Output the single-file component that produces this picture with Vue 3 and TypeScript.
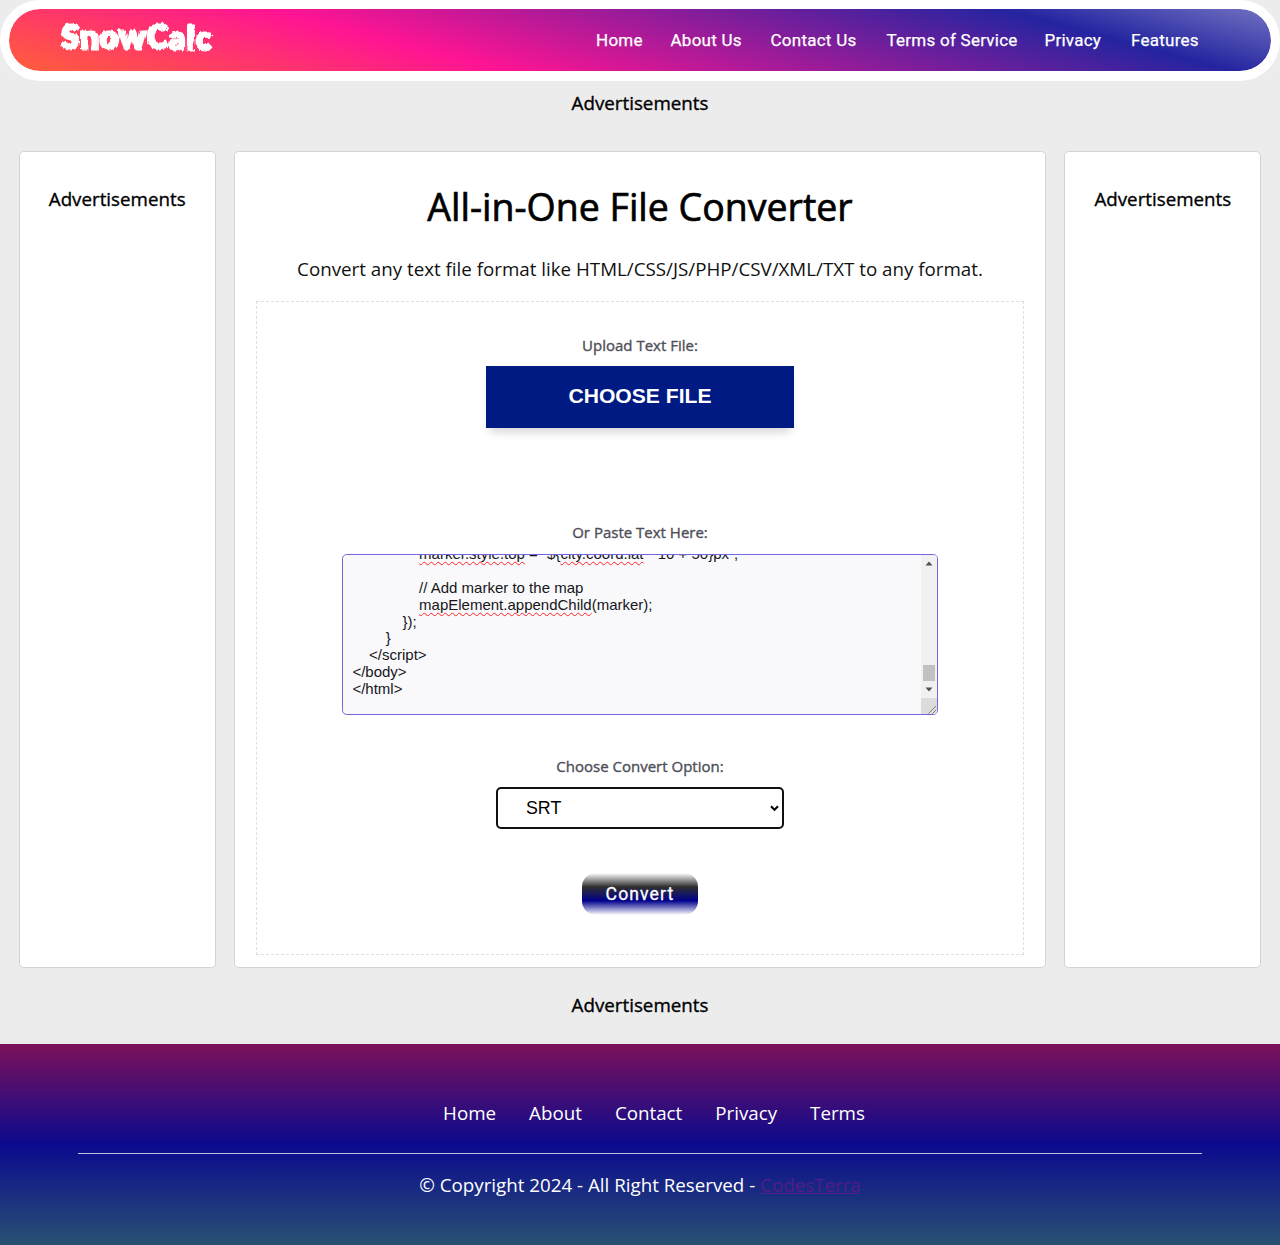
<script setup lang="ts">
interface NavItem {
  label: string
  width: number
}

const navItems: NavItem[] = [
  { label: 'Home', width: 46.5 },
  { label: 'About Us', width: 72 },
  { label: 'Contact Us', width: 88 },
  { label: 'Terms of Service', width: 130 },
  { label: 'Privacy', width: 58.5 },
  { label: 'Features', width: 70 },
]

const footerLinks: string[] = ['Home', 'About', 'Contact', 'Privacy', 'Terms']

interface Piece {
  text: string
  flagged?: boolean
}

const codeLines: Piece[][] = [
  [
    { text: '                ' },
    { text: 'marker.style.top', flagged: true },
    { text: ' = `${' },
    { text: 'city.coord.lat', flagged: true },
    { text: ' * 10 + 50}px`;' },
  ],
  [{ text: ' ' }],
  [{ text: '                // Add marker to the map' }],
  [
    { text: '                ' },
    { text: 'mapElement.appendChild', flagged: true },
    { text: '(marker);' },
  ],
  [{ text: '            });' }],
  [{ text: '        }' }],
  [{ text: '    </' + 'script>' }],
  [{ text: '</body>' }],
  [{ text: '</html>' }],
]

const logoLetters: string[] = [...'SnowCalc']
</script>

<template>
  <div class="page">
    <header class="header">
      <svg class="defs" width="0" height="0" aria-hidden="true">
        <filter id="rough" x="-5%" y="-20%" width="110%" height="140%">
          <feTurbulence type="turbulence" baseFrequency="0.26 0.05" numOctaves="1" seed="4" result="n" />
          <feDisplacementMap in="SourceGraphic" in2="n" scale="4.5" xChannelSelector="R" yChannelSelector="G" />
        </filter>
      </svg>
      <div class="logo">
        <span v-for="(l, i) in logoLetters" :key="i" :class="['glyph', { low: i > 4 }]">{{ l }}</span>
      </div>
      <nav class="nav">
        <a v-for="n in navItems" :key="n.label" :style="{ width: n.width + 'px' }">{{ n.label }}</a>
      </nav>
    </header>

    <div class="ad top-ad">Advertisements</div>

    <main class="columns">
      <aside class="card side"><div class="ad">Advertisements</div></aside>
      <section class="card main">
        <h1>All-in-One File Converter</h1>
        <p class="lead">Convert any text file format like HTML/CSS/JS/PHP/CSV/XML/TXT to any format.</p>
        <div class="converter">
          <label class="upload-label">Upload Text File:</label>
          <button class="choose" type="button">CHOOSE FILE</button>
          <label class="paste-label">Or Paste Text Here:</label>
          <div class="editor">
            <div class="code">
              <div v-for="(line, i) in codeLines" :key="i" class="line"><span v-for="(p, j) in line" :key="j" :class="{ flagged: p.flagged }">{{ p.text }}</span></div>
            </div>
            <div class="scrollbar">
              <svg width="16" height="160" viewBox="0 0 16 160">
                <path d="M4.500 10.500 8 6.500 11.500 10.500z" fill="#505050" />
                <rect x="2" y="110" width="12" height="16" fill="#c1c1c1" />
                <path d="M4.500 132.500 8 136.500 11.500 132.500z" fill="#505050" />
                <rect x="0" y="143" width="16" height="17" fill="#dcdcdc" />
                <path d="M7.500 158.500 15 151M11.500 158.500 15 155" stroke="#808080" stroke-width="1" fill="none" />
              </svg>
            </div>
          </div>
          <label class="option-label">Choose Convert Option:</label>
          <div class="select">
            <span>SRT</span>
            <svg width="9" height="7" viewBox="0 0 9 7"><path d="M1 1.300 4.500 4.800 8 1.300" fill="none" stroke="#000" stroke-width="2" /></svg>
          </div>
          <button class="convert" type="button">Convert</button>
        </div>
      </section>
      <aside class="card side"><div class="ad">Advertisements</div></aside>
    </main>

    <div class="ad bottom-ad">Advertisements</div>

    <footer class="footer">
      <nav class="footer-nav">
        <a v-for="f in footerLinks" :key="f">{{ f }}</a>
      </nav>
      <hr />
      <p>© Copyright 2024 - All Right Reserved - <a class="credit">CodesTerra</a></p>
    </footer>
  </div>
</template>

<style>
body {
  margin: 0;
  background: #ececec;
}
</style>

<style scoped>
.page {
  width: 1280px;
  height: 1245px;
  overflow: hidden;
  background: #ececec;
  font-family: 'Open Sans', sans-serif;
  font-size: 18.75px;
  color: #000;
  display: flex;
  flex-direction: column;
}
.header {
  box-sizing: border-box;
  height: 80.5px;
  flex: none;
  border: solid #fff;
  border-width: 9.4px 9.4px 10px;
  border-radius: 40px;
  background: linear-gradient(15deg, #ff5f3a 0%, #ff1493 33%, #2424a0 82%, #7272c2 100%) padding-box, #fff;
  display: flex;
  align-items: center;
  padding: 0 70px 0 50px;
  justify-content: space-between;
}
.defs {
  position: absolute;
}
.logo {
  font: 900 33px/40px Lato, sans-serif;
  color: #fff;
  display: flex;
  gap: 0.7px;
  filter: url(#rough);
  -webkit-text-stroke: 2.8px #fff;
  margin: -11px 0 0 0.5px;
}
.glyph.low {
  padding-top: 1.5px;
}
.nav {
  display: flex;
  gap: 28px;
  font: 400 17px/24px Roboto, sans-serif;
  letter-spacing: 0.25px;
  -webkit-text-stroke: 0.25px #fff;
  color: #fff;
  white-space: nowrap;
}
.nav a {
  flex: none;
}
.ad {
  text-align: center;
  line-height: 26px;
  -webkit-text-stroke: 0.35px #000;
}
.top-ad {
  padding: 9.500px 0 34.500px;
}
.columns {
  display: flex;
  gap: 18.7px;
  padding: 0 18.7px;
  height: 817px;
  flex: none;
}
.card {
  box-sizing: border-box;
  background: #fff;
  border: 1px solid #d3d3d3;
  border-radius: 4.7px;
}
.side {
  width: 197px;
  flex: none;
  padding-top: 34px;
}
.main {
  flex: 1;
  padding: 0 21px;
  text-align: center;
}
h1 {
  margin: 29px 0 0;
  font-size: 37.5px;
  line-height: 52px;
  font-weight: 400;
  -webkit-text-stroke: 0.7px #000;
}
.lead {
  margin: 23px 0 0;
  line-height: 26px;
  white-space: nowrap;
  color: #111;
}
.converter {
  box-sizing: border-box;
  margin-top: 19px;
  height: 654px;
  border: 1px dashed #dfdfdf;
  display: flex;
  flex-direction: column;
  align-items: center;
}
label {
  font-size: 15px;
  line-height: 20px;
  color: #4e4e57;
  -webkit-text-stroke: 0.35px #4e4e57;
}
.upload-label {
  margin-top: 33px;
}
.choose {
  margin-top: 11px;
  width: 308px;
  height: 62px;
  padding: 0 0 2px;
  border: 0;
  background: #001a83;
  color: #fff;
  font: bold 21.1px 'Liberation Sans', Arial, sans-serif;
  box-shadow: 0 8px 9px -4px rgba(0, 0, 0, 0.17);
}
.paste-label {
  margin-top: 94.500px;
}
.editor {
  box-sizing: border-box;
  margin-top: 11.500px;
  width: 596px;
  height: 161px;
  border: 1px solid #7168e0;
  border-radius: 4.7px;
  background: #f9f9fb;
  overflow: hidden;
  display: flex;
  justify-content: space-between;
}
.code {
  margin: -8.500px 0 0 9.4px;
  font: 15px/16.875px 'Liberation Sans', Arial, sans-serif;
  color: #16161a;
  text-align: left;
  white-space: pre;
}
.line {
  height: 16.875px;
}
.flagged {
  text-decoration: underline wavy #f22 1.3px;
  text-decoration-skip-ink: none;
  text-underline-offset: 1.500px;
}
.scrollbar {
  width: 16px;
  background: #f1f1f1;
}
.scrollbar svg {
  display: block;
}
.option-label {
  margin-top: 41px;
}
.select {
  box-sizing: border-box;
  margin-top: 11px;
  width: 288px;
  height: 42px;
  border: 2px solid #101010;
  border-radius: 5px;
  background: #fff;
  padding: 1px 3px 0 28px;
  font: 17.8px 'Liberation Sans', Arial, sans-serif;
  display: flex;
  align-items: center;
  justify-content: space-between;
}
.convert {
  margin-top: 44.500px;
  width: 116px;
  height: 42px;
  border: 0;
  padding: 0;
  border-radius: 14px;
  background: linear-gradient(#fff 0%, #2f2f2f 33%, #00008b 66%, #fff 100%);
  color: #fff;
  font: 400 17.6px Roboto, sans-serif;
  -webkit-text-stroke: 0.3px #fff;
  letter-spacing: 1.1px;
}
.bottom-ad {
  padding: 24.500px 0 25.500px;
}
.footer {
  flex: none;
  height: 202px;
  color: #fff;
  background: linear-gradient(#7c115a 0%, #0b0a8e 50%, #295272 100%);
  text-align: center;
}
.footer-nav {
  display: flex;
  justify-content: center;
  gap: 33px;
  padding: 56px 0 0 28px;
  line-height: 26px;
}
hr {
  width: 1124px;
  height: 1px;
  border: 0;
  background: #c0c0e0;
  margin: 27px auto 0;
}
.footer p {
  margin: 17.500px 0 0;
  line-height: 28px;
}
.credit {
  color: #551a8b;
  text-decoration: underline;
}
</style>
